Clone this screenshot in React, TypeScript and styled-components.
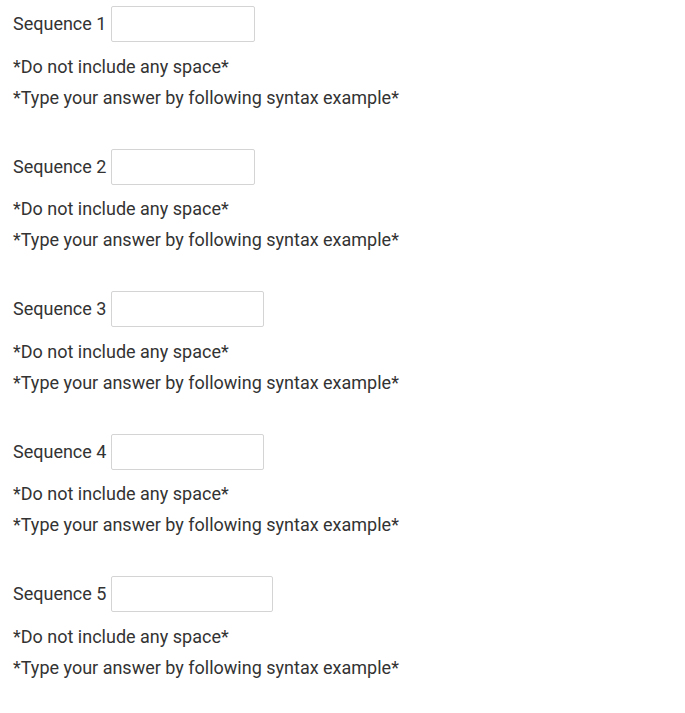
import React from "react";
import styled, { createGlobalStyle } from "styled-components";

const Global = createGlobalStyle`
  html, body { margin: 0; padding: 0; background: #ffffff; }
  body { font-family: Roboto, "Noto Sans", sans-serif; color: #333333; }
`;

const Page = styled.div`
  display: flex;
  flex-direction: column;
  padding: 6px 0 0 13px;
  gap: 36px;
`;

const Block = styled.section`
  display: flex;
  flex-direction: column;
`;

const Row = styled.div`
  display: flex;
  align-items: center;
  gap: 5px;
  height: 36px;
  margin-bottom: 8.5px;
`;

const Label = styled.label`
  font-size: 18px;
  line-height: 20px;
`;

const Field = styled.input<{ $w: number }>`
  box-sizing: border-box;
  width: ${(p) => p.$w}px;
  height: 36px;
  border: 1px solid #d4d4d4;
  border-radius: 2px;
  background: #fff;
  outline: none;
  padding: 0 6px;
  font: inherit;
`;

const Note = styled.p`
  margin: 0;
  font-size: 18px;
  line-height: 31px;
`;

const items = [
  { n: 1, w: 144 },
  { n: 2, w: 144 },
  { n: 3, w: 153 },
  { n: 4, w: 153 },
  { n: 5, w: 162 },
];

export default function App() {
  return (
    <>
      <Global />
      <Page>
        {items.map((it) => (
          <Block key={it.n}>
            <Row>
              <Label htmlFor={`seq${it.n}`}>Sequence {it.n}</Label>
              <Field id={`seq${it.n}`} type="text" $w={it.w} />
            </Row>
            <Note>*Do not include any space*</Note>
            <Note>*Type your answer by following syntax example*</Note>
          </Block>
        ))}
      </Page>
    </>
  );
}
